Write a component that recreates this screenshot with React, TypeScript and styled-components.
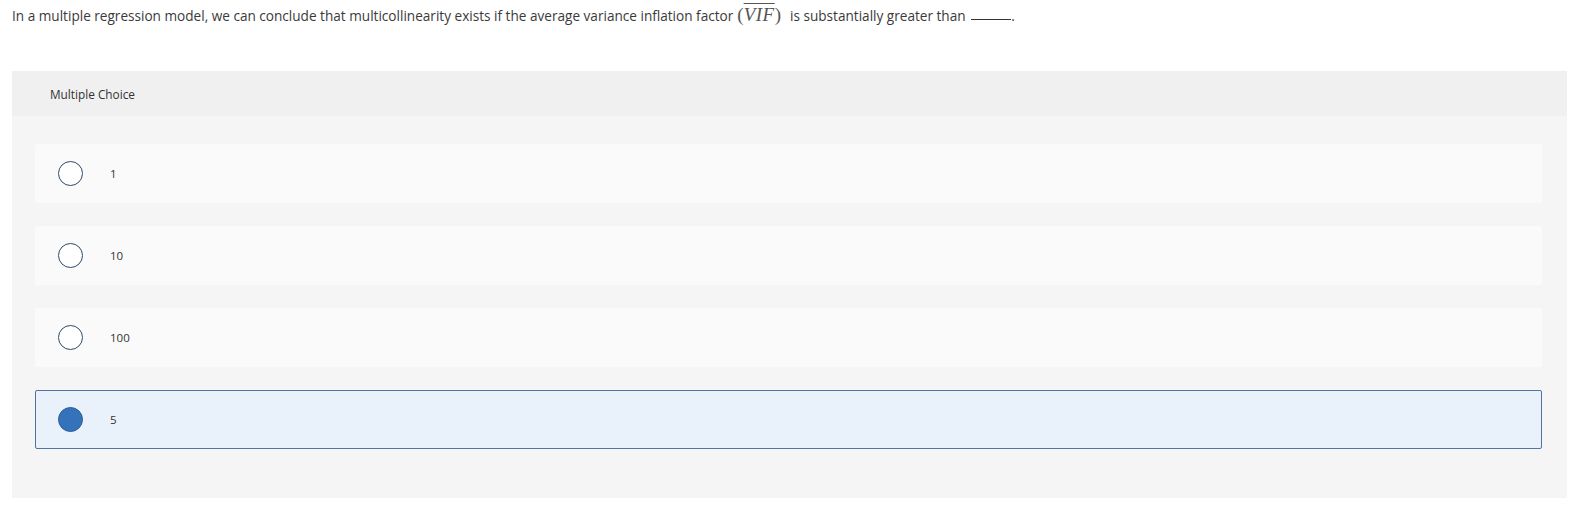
import React from "react";
import styled, { createGlobalStyle } from "styled-components";

const Global = createGlobalStyle`
  html, body { margin: 0; padding: 0; background: #ffffff; }
  body { font-family: "Open Sans", Lato, Arial, sans-serif; color: #333333; }
`;

const Page = styled.div`
  padding: 0 27px 0 12px;
`;

const Prompt = styled.p`
  margin: 0;
  padding-top: 5px;
  height: 71px;
  box-sizing: border-box;
  font-size: 13.6px;
  line-height: 20px;
  color: #3a3a3a;
  white-space: nowrap;
`;

const MathExpr = styled.span`
  font-family: "Liberation Serif", "Times New Roman", serif;
  font-size: 19px;
  color: #555;
  margin: 0 9px 0 4px;
`;

const Over = styled.span`
  font-style: italic;
  text-decoration: overline;
  text-decoration-thickness: 1px;
  letter-spacing: 0.5px;
`;

const Blank = styled.span`
  display: inline-block;
  width: 40px;
  border-bottom: 1px solid #333;
  margin-left: 2px;
  vertical-align: 1px;
`;

const Panel = styled.section`
  background: #f5f5f5;
  padding-bottom: 49px;
`;

const Header = styled.div`
  height: 45px;
  background: #f0f0f0;
  display: flex;
  align-items: center;
  padding-left: 38px;
  font-size: 11.8px;
  color: #333;
`;

const Options = styled.div`
  display: flex;
  flex-direction: column;
  gap: 23px;
  padding: 28px 25px 0 23px;
`;

const Option = styled.label<{ $selected?: boolean }>`
  height: 59px;
  box-sizing: border-box;
  display: flex;
  align-items: center;
  padding-left: ${(p) => (p.$selected ? 22 : 23)}px;
  background: ${(p) => (p.$selected ? "#e9f2fb" : "#fafafa")};
  border: ${(p) => (p.$selected ? "1px solid #4f74a3" : "none")};
  border-radius: 2px;
  font-size: 11.5px;
  color: #333;
`;

const Radio = styled.span<{ $checked?: boolean }>`
  width: 25px;
  height: 25px;
  box-sizing: border-box;
  border-radius: 50%;
  border: 1px solid ${(p) => (p.$checked ? "#2b5e98" : "#2f4a66")};
  background: ${(p) => (p.$checked ? "#3473b9" : "#ffffff")};
  flex: none;
  margin-right: 27px;
`;

const options = [
  { label: "1", selected: false },
  { label: "10", selected: false },
  { label: "100", selected: false },
  { label: "5", selected: true },
];

export default function App() {
  return (
    <>
      <Global />
      <Page>
        <Prompt>
          In a multiple regression model, we can conclude that multicollinearity exists if the average variance
          inflation factor
          <MathExpr>
            (<Over>VIF</Over>)
          </MathExpr>
          is substantially greater than <Blank />.
        </Prompt>
        <Panel>
          <Header>Multiple Choice</Header>
          <Options>
            {options.map((o) => (
              <Option key={o.label} $selected={o.selected}>
                <Radio $checked={o.selected} />
                {o.label}
              </Option>
            ))}
          </Options>
        </Panel>
      </Page>
    </>
  );
}
